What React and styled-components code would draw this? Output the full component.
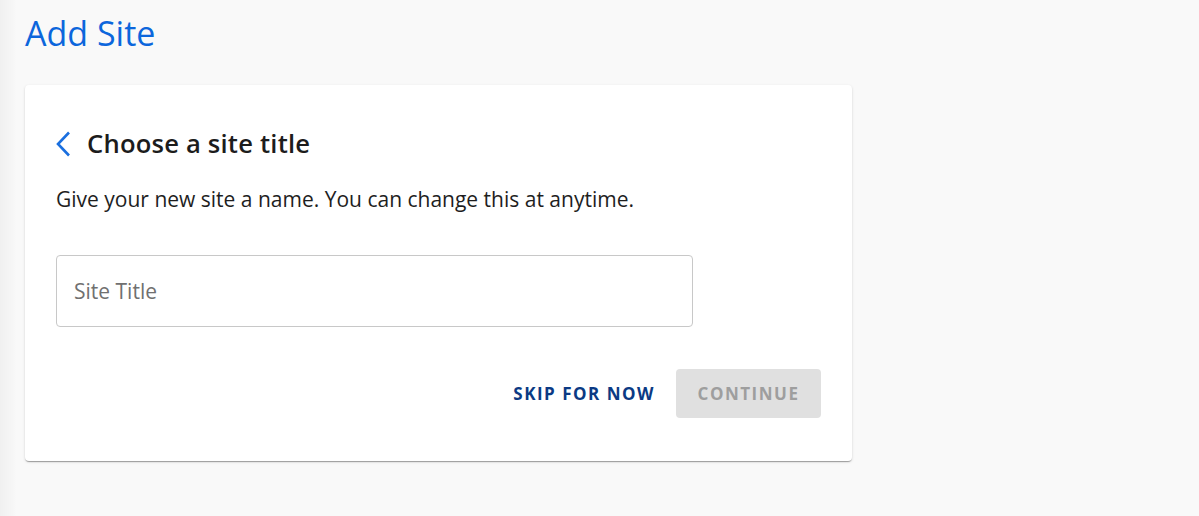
import styled, { createGlobalStyle } from "styled-components";

const GlobalStyle = createGlobalStyle`
  html, body {
    margin: 0;
    padding: 0;
  }
  body {
    background: linear-gradient(to right, #f0f0f0 0px, #f7f7f7 14px, #f9f9f9 16px);
    font-family: "Open Sans", "Noto Sans", "Liberation Sans", sans-serif;
    min-height: 516px;
  }
`;

const Page = styled.div`
  padding: 12px 0 0 25px;
  width: 827px;
`;

const PageTitle = styled.h1`
  margin: 0 0 31px;
  font-size: 34px;
  font-weight: 400;
  line-height: 42px;
  color: #0c66dc;
`;

const Card = styled.section`
  background: #fff;
  border-radius: 4px;
  box-shadow: 0 1px 1px rgba(0, 0, 0, 0.14), 0 2px 1px -1px rgba(0, 0, 0, 0.2),
    0 1px 3px rgba(0, 0, 0, 0.12);
  padding: 42px 31px 43px;
  display: flex;
  flex-direction: column;
`;

const Header = styled.div`
  display: flex;
  align-items: center;
  gap: 15px;
  height: 34px;
`;

const BackButton = styled.button`
  border: 0;
  background: none;
  padding: 0;
  display: flex;
  cursor: pointer;
  color: #1a6fdf;
`;

const CardTitle = styled.h2`
  margin: 0 0 2px;
  font-size: 25.6px;
  font-weight: 600;
  color: #1c1c1c;
  letter-spacing: 0.2px;
`;

const Description = styled.p`
  margin: 24px 0 0;
  font-size: 21px;
  line-height: 28px;
  color: #1e1e1e;
`;

const Field = styled.input`
  margin-top: 42px;
  width: 637px;
  height: 72px;
  box-sizing: border-box;
  border: 1px solid #c8c8c8;
  border-radius: 4px;
  padding: 0 17px;
  font-family: inherit;
  font-size: 21px;
  color: #222;
  outline: none;
  &::placeholder {
    color: #707070;
  }
`;

const Actions = styled.div`
  margin-top: 42px;
  display: flex;
  justify-content: flex-end;
  align-items: center;
  gap: 21px;
`;

const TextButton = styled.button`
  border: 0;
  background: none;
  padding: 0;
  font-family: inherit;
  font-size: 17px;
  font-weight: 700;
  letter-spacing: 1.5px;
  color: ${(p) => (p.disabled ? "#9e9e9e" : "#0b3a84")};
  cursor: pointer;
`;

const FilledButton = styled(TextButton)`
  background: #e0e0e0;
  border-radius: 4px;
  width: 145px;
  height: 49px;
  cursor: default;
`;

export default function App() {
  return (
    <>
      <GlobalStyle />
      <Page>
        <PageTitle>Add Site</PageTitle>
        <Card>
          <Header>
            <BackButton aria-label="Back">
              <svg width="16" height="26" viewBox="0 0 16 26" fill="none">
                <path
                  d="M13 1.5 L2 13 L13 24.5"
                  stroke="currentColor"
                  strokeWidth="2.6"
                />
              </svg>
            </BackButton>
            <CardTitle>Choose a site title</CardTitle>
          </Header>
          <Description>
            Give your new site a name. You can change this at anytime.
          </Description>
          <Field placeholder="Site Title" />
          <Actions>
            <TextButton>SKIP FOR NOW</TextButton>
            <FilledButton disabled>CONTINUE</FilledButton>
          </Actions>
        </Card>
      </Page>
    </>
  );
}
